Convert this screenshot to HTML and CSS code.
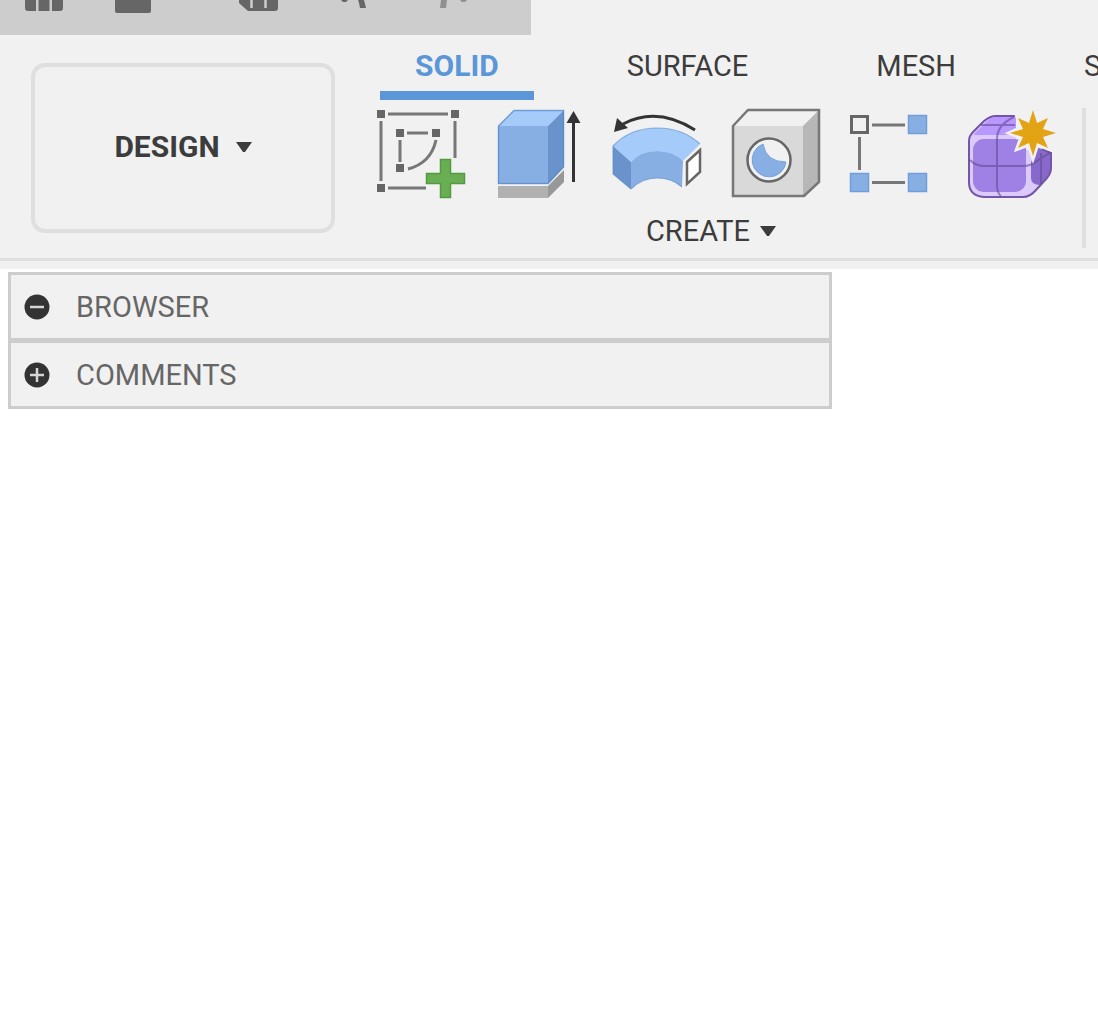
FILE: index.html
```html
<!DOCTYPE html>
<html lang="en">
<head>
<meta charset="utf-8">
<meta name="viewport" content="width=device-width, initial-scale=1">
<title>Design</title>
<link rel="stylesheet" href="styles.css">
</head>
<body>
<header>
  <div class="quickbar">
    <div class="quick-group files">
      <button class="quick" aria-label="Data panel"><svg viewBox="0 0 40 35" fill="#666"><path d="M1 0h11v11H4q-3 0-3-3zM14.500 0h11v11h-11zM28 0h11v8q0 3-3 3h-8z"/></svg></button>
      <button class="quick" aria-label="File"><svg viewBox="0 0 40 35" fill="#666"><path d="M1 0h36v11q0 2-2 2H3q-2 0-2-2z"/></svg></button>
    </div>
    <div class="quick-group history">
      <button class="quick" aria-label="Save"><svg viewBox="0 0 40 35"><path fill="#666" d="M1 0h39v8q0 3-3 3H10L1 3z"/><path stroke="#cdcdcd" stroke-width="2.500" d="M13.500 0v8M27.500 0v8"/></svg></button>
      <button class="quick" aria-label="Undo"><svg viewBox="0 0 40 35" fill="#666"><path d="M20 0h6l2 8h-6l-1-5zM3 0h7l-2 2H5z"/></svg></button>
      <button class="quick" aria-label="Redo"><svg viewBox="0 0 40 35" fill="#909090"><path d="M3 0h6l-1 8H2zM22 0h7l-2 2h-3z"/></svg></button>
    </div>
  </div>
  <div class="ribbon">
    <button class="workspace">DESIGN <svg class="caret" viewBox="0 0 16 11"><path d="M0 0h16L9 10H7z"/></svg></button>
    <div class="commands">
      <nav class="tabs">
        <a class="tab active" href="#solid" aria-current="page">SOLID</a>
        <a class="tab" href="#surface">SURFACE</a>
        <a class="tab" href="#mesh">MESH</a>
        <a class="tab" href="#s">S</a>
      </nav>
      <div class="groups">
        <section class="group">
          <div class="tools">
            <button class="tool" aria-label="Create sketch"><svg viewBox="0 0 96 96">
              <g fill="none" stroke="#777" stroke-width="3"><path d="M14 9h60M7 16v60M81 16v37M14 83h38M33 28h21M26 35v22M62 35Q57 58 34 64"/></g>
              <path fill="#666" d="M3 5h8v8H3zM77 5h8v8h-8zM3 79h8v8H3zM22 24h8v8h-8zM58 24h8v8h-8zM22 59h8v8h-8z"/>
              <path fill="#6aae54" stroke="#539a40" stroke-width="1.500" d="M66.500 54.500h10v14h14v10h-14v14h-10v-14h-14v-10h14z"/>
            </svg></button>
            <button class="tool" aria-label="Extrude"><svg viewBox="0 0 96 96">
              <path fill="#b1b1b1" d="M6 81h50v12H6z"/><path fill="#989898" d="M56 81l16-16v12L56 93z"/>
              <path fill="#a5cbfb" d="M6 21L22 5h50L56 21z"/><path fill="#87afe4" d="M6 21h50v58H6z"/><path fill="#6a93cb" d="M56 21L72 5v57L56 79z"/>
              <path fill="none" stroke="#5588c6" stroke-opacity=".7" stroke-width="1.500" d="M6.500 21L22 5.500h49.500V62L56 78.500H6.500z"/>
              <path stroke="#333" stroke-width="3" d="M81.500 14v63"/><path fill="#333" d="M81.500 6l7 12h-14z"/>
            </svg></button>
            <button class="tool" aria-label="Revolve"><svg viewBox="0 0 96 96">
              <path fill="#a5cbfb" d="M3 41Q20 23 47 23T91 40L73 56Q62 46 47 46T21 57z"/>
              <path fill="#87afe4" d="M21 57Q31 46 47 46T73 56L72 82Q62 73 47 73T21 84z"/>
              <path fill="#6a93cb" d="M3 41l18 16v27L3 69z"/>
              <path fill="none" stroke="#5588c6" stroke-opacity=".6" stroke-width="1.200" d="M21 84L3 69V41Q20 23 47 23T91 40M21 84Q32 73 47 73T72 82"/>
              <path fill="#fff" stroke="#f1f1f1" stroke-width="7" d="M77 57l14-14v24L77 81z"/>
              <path fill="#fff" stroke="#666" stroke-width="2.500" d="M77 57l13-12v22L77 79z"/>
              <path fill="none" stroke="#333" stroke-width="3" d="M13 19Q47 1 85 25"/><path fill="#333" d="M4 27L7 13 18 23z"/>
            </svg></button>
            <button class="tool" aria-label="Hole"><svg viewBox="0 0 96 96">
              <path fill="#f1f1f1" d="M5 21L20 5h71L75 21z"/><path fill="#d9d9d9" d="M5 21h70v70H5z"/><path fill="#b7b7b7" d="M75 21L91 5v72L75 91z"/>
              <path fill="none" stroke="#777" stroke-width="2.500" d="M5 21L20 5h71v72L76 91H5z"/>
              <circle cx="41" cy="55" r="21.500" fill="#f1f1f1" stroke="#666" stroke-width="2.500"/>
              <path fill="#87afe4" stroke="#75a0db" d="M35 39A17 17 0 1 0 58 57Q38 57 35 39z"/>
            </svg></button>
            <button class="tool" aria-label="Pattern"><svg viewBox="0 0 96 96">
              <path stroke="#777" stroke-width="3" d="M26 20h33M13.500 32v33M26 77.500h33"/>
              <path fill="#f1f1f1" stroke="#666" stroke-width="3" d="M5.500 11.500h16v16h-16z"/>
              <path fill="#87afe4" stroke="#709ed8" stroke-width="1.500" d="M62.500 10.500h18v18h-18zM4.500 68.500h18v18h-18zM62.500 68.500h18v18h-18z"/>
            </svg></button>
            <button class="tool" aria-label="Create form"><svg viewBox="0 0 96 96">
              <path fill="#dccafb" d="M5 33L20 16q6-5 12-5h20v34h25l9 3v20L72 85q-7 7-13 7H20Q5 91 5 77z"/>
              <path fill="#b897ff" d="M10 29L22 17q5-5 11-5h19v18H10z"/>
              <rect x="9" y="34" width="53" height="53" rx="11" fill="#9f80e5"/>
              <path fill="#8669ca" d="M67 59q0-5 5-8V42l15 5v21L76 80q-9 0-9-7z"/>
              <path fill="none" stroke="#7356a8" stroke-width="2" d="M51 11H32q-6 0-12 5L9 27q-4 4-4 9v41q0 14 15 15h39q7 0 13-7l11-12q4-5 4-10V48l-9-4"/>
              <path fill="none" stroke="#65498f" stroke-opacity=".6" stroke-width="2" d="M17 20h34M50 12Q33 20 33 34v46q0 8 4 11M6 55q6 6 14 6h39q8 0 14-5l14-9M77 48v31"/>
              <path fill="#f1f1f1" stroke="#f1f1f1" stroke-width="5" d="M69 5l4 12 11-5-4 11 11 5-11 4 4 11-11-4-4 12-4-12-11 4 4-11-11-4 11-5-4-11 11 5z"/>
              <path fill="#e2a414" d="M69 5l4 13 11-5-5 11 13 4-13 4 5 11-11-5-4 13-4-13-11 5 5-11-13-4 13-4-5-11 11 5z"/>
            </svg></button>
          </div>
          <button class="group-menu">CREATE <svg class="caret" viewBox="0 0 16 11"><path d="M0 0h16L9 10H7z"/></svg></button>
        </section>
      </div>
    </div>
  </div>
</header>
<main class="panels">
  <button class="panel" aria-expanded="true"><svg class="toggle" viewBox="0 0 26 26"><circle cx="13" cy="13" r="12.500" fill="#333"/><path stroke="#d5d5d5" stroke-width="2.500" d="M6 13h14"/></svg>BROWSER</button>
  <button class="panel" aria-expanded="false"><svg class="toggle" viewBox="0 0 26 26"><circle cx="13" cy="13" r="12.500" fill="#333"/><path stroke="#d5d5d5" stroke-width="2.500" d="M6 13h14M13 6v14"/></svg>COMMENTS</button>
</main>
</body>
</html>
```

FILE: styles.css
```css
* {
  box-sizing: border-box;
}

body {
  margin: 0;
  background: #fff;
  color: #3c3c3c;
  font: 29px/30px Roboto, "Liberation Sans", sans-serif;
  overflow-x: hidden;
}

button {
  margin: 0;
  padding: 0;
  border: 0;
  background: none;
  color: inherit;
  font: inherit;
}

svg {
  display: block;
}

header {
  background: #f1f1f1;
  padding-bottom: 8px;
}

.quickbar {
  display: flex;
  gap: 84px;
  width: fit-content;
  padding: 0 53px 0 24px;
  background: #cdcdcd;
}

.quick-group {
  display: flex;
}

.files {
  gap: 50px;
}

.history {
  gap: 60px;
}

.quick svg {
  width: 40px;
  height: 35px;
}

.ribbon {
  display: flex;
  align-items: flex-start;
  gap: 39px;
  padding: 8px 0 12px 31px;
  border-bottom: 3px solid #dfdfdf;
  overflow: hidden;
}

.workspace {
  display: flex;
  align-items: center;
  justify-content: center;
  gap: 16px;
  flex: none;
  width: 304px;
  height: 170px;
  margin-top: 20px;
  padding-bottom: 2px;
  border: 4px solid #dfdfdf;
  border-radius: 14px;
  font-size: 30px;
  font-weight: 700;
}

.caret {
  width: 16px;
  height: 11px;
  fill: #3c3c3c;
}

.commands {
  flex: none;
}

.tabs {
  display: flex;
  gap: 58px;
  padding-left: 6px;
}

.tab {
  padding: 8px 35px 10px;
  border-bottom: 9px solid transparent;
  color: inherit;
  text-decoration: none;
}

.tab.active {
  border-color: #5b97d8;
  color: #5b97d8;
  font-size: 30px;
  font-weight: 700;
}

.groups {
  display: flex;
  padding-top: 5px;
}

.group {
  display: flex;
  flex-direction: column;
  align-items: center;
  gap: 15px;
  padding-right: 22px;
  position: relative;
}

.group::after {
  content: "";
  position: absolute;
  top: 3px;
  right: -4px;
  bottom: -2px;
  width: 4px;
  background: #dfdfdf;
}

.tools {
  display: flex;
  gap: 22px;
}

.tool svg {
  width: 96px;
  height: 96px;
}

.group-menu {
  display: flex;
  align-items: center;
  gap: 10px;
  padding-right: 12px;
}

.panels {
  display: grid;
  gap: 5px;
  width: 75%;
  margin: 3px 0 0 8px;
  border: 3px solid #cdcdcd;
  background: #cdcdcd;
}

.panel {
  display: flex;
  align-items: center;
  gap: 26px;
  height: 63px;
  padding: 0 13px;
  background: #f1f1f1;
  color: #666;
}

.toggle {
  width: 26px;
  height: 26px;
}
```
